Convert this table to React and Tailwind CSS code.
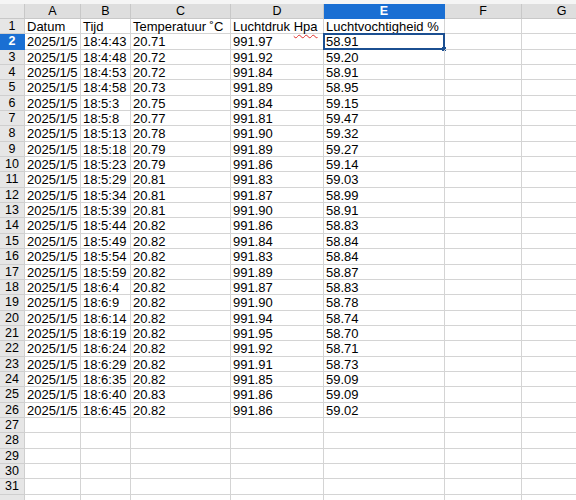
import React from "react";

const cols = [
  { key: "A", w: "w-[56px]" },
  { key: "B", w: "w-[50px]" },
  { key: "C", w: "w-[100px]" },
  { key: "D", w: "w-[93px]" },
  { key: "E", w: "w-[121px]" },
  { key: "F", w: "w-[77px]" },
  { key: "G", w: "w-[80px]" },
];

const data = [
  ["18:4:43", "20.71", "991.97", "58.91"],
  ["18:4:48", "20.72", "991.92", "59.20"],
  ["18:4:53", "20.72", "991.84", "58.91"],
  ["18:4:58", "20.73", "991.89", "58.95"],
  ["18:5:3", "20.75", "991.84", "59.15"],
  ["18:5:8", "20.77", "991.81", "59.47"],
  ["18:5:13", "20.78", "991.90", "59.32"],
  ["18:5:18", "20.79", "991.89", "59.27"],
  ["18:5:23", "20.79", "991.86", "59.14"],
  ["18:5:29", "20.81", "991.83", "59.03"],
  ["18:5:34", "20.81", "991.87", "58.99"],
  ["18:5:39", "20.81", "991.90", "58.91"],
  ["18:5:44", "20.82", "991.86", "58.83"],
  ["18:5:49", "20.82", "991.84", "58.84"],
  ["18:5:54", "20.82", "991.83", "58.84"],
  ["18:5:59", "20.82", "991.89", "58.87"],
  ["18:6:4", "20.82", "991.87", "58.83"],
  ["18:6:9", "20.82", "991.90", "58.78"],
  ["18:6:14", "20.82", "991.94", "58.74"],
  ["18:6:19", "20.82", "991.95", "58.70"],
  ["18:6:24", "20.82", "991.92", "58.71"],
  ["18:6:29", "20.82", "991.91", "58.73"],
  ["18:6:35", "20.82", "991.85", "59.09"],
  ["18:6:40", "20.83", "991.86", "59.09"],
  ["18:6:45", "20.82", "991.86", "59.02"],
];

function rowCells(n) {
  if (n === 1)
    return ["Datum", "Tijd", "Temperatuur ˚C", "", "Luchtvochtigheid %", "", ""];
  const d = data[n - 2];
  if (!d) return ["", "", "", "", "", "", ""];
  return ["2025/1/5", d[0], d[1], d[2], d[3], "", ""];
}

export default function App() {
  const rows = Array.from({ length: 32 }, (_, i) => i + 1);
  return (
    <div
      className="w-[576px] h-[500px] overflow-hidden bg-white text-black"
      style={{ fontFamily: '"Liberation Sans", Arial, sans-serif' }}
    >
      <div className="h-[4px] bg-[#f5f5f5]" />
      {/* column header */}
      <div className="flex h-[15px] text-[12.5px] leading-[14px]">
        <div className="w-[25px] shrink-0 bg-[#e6e6e6] border-r border-b border-[#c8c8c8]" />
        {cols.map((c) => (
          <div
            key={c.key}
            className={
              c.key === "E"
                ? `${c.w} shrink-0 bg-[#1a6fd3] text-white font-bold text-center border-r border-b border-[#1a6fd3]`
                : `${c.w} shrink-0 bg-[#dedede] text-center border-r border-b border-[#c8c8c8]`
            }
          >
            {c.key}
          </div>
        ))}
      </div>
      {rows.map((n) => {
        const cells = rowCells(n);
        return (
          <div key={n} className="flex h-[15.35px] text-[13px] leading-[15px]">
            <div
              className={
                n === 2
                  ? "w-[25px] shrink-0 bg-[#1a6fd3] text-white font-bold text-[12.5px] text-center border-r border-b border-[#1a6fd3]"
                  : "w-[25px] shrink-0 bg-[#e6e6e6] text-[12.5px] text-center border-r border-b border-[#cfcfcf]"
              }
            >
              {n < 32 ? n : ""}
            </div>
            {cols.map((c, i) => {
              const selected = n === 2 && c.key === "E";
              return (
                <div
                  key={c.key}
                  className={`${c.w} shrink-0 relative pl-[2px] whitespace-nowrap border-r border-b border-[#d4d4d4]`}
                >
                  {n === 1 && c.key === "D" ? (
                    <span>
                      Luchtdruk{" "}
                      <span className="underline decoration-wavy decoration-[#e0312b] decoration-1 underline-offset-[3px]">
                        Hpa
                      </span>
                    </span>
                  ) : (
                    cells[i]
                  )}
                  {selected && (
                    <div className="absolute -left-[1px] -top-[1px] w-[122px] h-[16.5px] border-2 border-[#1b4f91]">
                      <div className="absolute -right-[3px] -bottom-[3px] w-[4px] h-[4px] bg-[#1b4f91]" />
                    </div>
                  )}
                </div>
              );
            })}
          </div>
        );
      })}
    </div>
  );
}
